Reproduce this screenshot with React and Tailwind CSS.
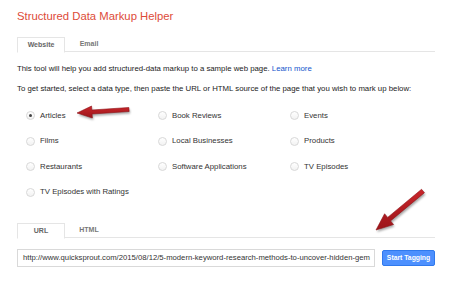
const TYPES = [
  'Articles', 'Book Reviews', 'Events',
  'Films', 'Local Businesses', 'Products',
  'Restaurants', 'Software Applications', 'TV Episodes',
  'TV Episodes with Ratings',
];

function arrowPoints([x1, y1], [x2, y2], shaft, headLen, headW) {
  const len = Math.hypot(x2 - x1, y2 - y1);
  const ux = (x2 - x1) / len;
  const uy = (y2 - y1) / len;
  const nx = -uy;
  const ny = ux;
  const nkx = x2 - ux * headLen;
  const nky = y2 - uy * headLen;
  const p = (x, y, k) => `${x + nx * k},${y + ny * k}`;
  return [
    p(x1, y1, shaft / 2),
    p(nkx, nky, shaft / 2),
    p(nkx, nky, headW / 2),
    `${x2},${y2}`,
    p(nkx, nky, -headW / 2),
    p(nkx, nky, -shaft / 2),
    p(x1, y1, -shaft / 2),
  ].join(' ');
}

function Arrows() {
  const a1 = arrowPoints([129, 109.5], [77, 113], 4, 15, 12);
  const a2 = arrowPoints([423, 191], [376, 230], 4.5, 17, 14);
  return (
    <svg className="absolute inset-0 pointer-events-none" width="474" height="289">
      <defs>
        <filter id="sh" x="-20%" y="-20%" width="140%" height="140%">
          <feGaussianBlur stdDeviation="1.2" />
        </filter>
        <linearGradient id="red" x1="0" y1="0" x2="0" y2="1">
          <stop offset="0" stopColor="#c9262b" />
          <stop offset="1" stopColor="#9b151a" />
        </linearGradient>
      </defs>
      {[a1, a2].map((pts, i) => (
        <g key={i}>
          <polygon points={pts} fill="rgba(0,0,0,0.35)" filter="url(#sh)" transform="translate(1,2)" />
          <polygon points={pts} fill="url(#red)" stroke="#8e1217" strokeWidth="0.6" strokeLinejoin="round" />
        </g>
      ))}
    </svg>
  );
}

function Tabs({ items }) {
  return (
    <div className="flex h-[15px] border-b border-[#e5e5e5]">
      {items.map((t, i) => (
        <div
          key={t}
          className={
            i === 0
              ? 'w-[48px] h-[16px] -mb-px flex items-center justify-center border border-[#e5e5e5] border-b-white bg-white text-[7px] font-bold text-[#666]'
              : 'w-[48px] h-[15px] flex items-center justify-center text-[7px] font-bold text-[#777]'
          }
        >
          {t}
        </div>
      ))}
    </div>
  );
}

function Radio({ label, checked }) {
  return (
    <div className="flex items-center h-[25.5px]">
      <span className="w-[9px] h-[9px] rounded-full border border-[#d8d8d8] bg-gradient-to-b from-white to-[#f2f2f2] flex items-center justify-center shrink-0">
        {checked && <span className="w-[3px] h-[3px] rounded-full bg-[#444]" />}
      </span>
      <span className="ml-[5px] text-[7.8px] text-[#333]">{label}</span>
    </div>
  );
}

export default function App() {
  return (
    <div className="relative w-[474px] h-[289px] bg-white overflow-hidden font-['Liberation_Sans',Arial,sans-serif]">
      <div className="pl-[17px] w-[435px]">
        <h1 className="pt-[9px] text-[11.3px] leading-[14px] text-[#dd4b39]">Structured Data Markup Helper</h1>

        <div className="mt-[14px]">
          <Tabs items={['Website', 'Email']} />
        </div>

        <p className="mt-[11px] text-[7.8px] leading-[12px] text-[#222]">
          This tool will help you add structured-data markup to a sample web page.{' '}
          <span className="text-[#1155cc]">Learn more</span>
        </p>
        <p className="mt-[8px] text-[7.8px] leading-[12px] text-[#222] whitespace-nowrap">
          To get started, select a data type, then paste the URL or HTML source of the page that you wish to mark up below:
        </p>

        <div className="mt-[8px] ml-[9px] grid grid-cols-[132px_132px_132px]">
          {TYPES.map((t, i) => (
            <Radio key={t} label={t} checked={i === 0} />
          ))}
        </div>

        <div className="mt-[18px]">
          <Tabs items={['URL', 'HTML']} />
        </div>

        <div className="mt-[11px] flex items-center gap-[7px]">
          <div className="w-[358px] h-[18px] border border-[#d9d9d9] flex items-center pl-[5px] pr-[3px]">
            <span className="text-[7.7px] text-[#333] whitespace-nowrap">
              http://www.quicksprout.com/2015/08/12/5-modern-keyword-research-methods-to-uncover-hidden-gem
            </span>
          </div>
          <button className="w-[53px] h-[16px] rounded-[2px] bg-[#4d90fe] border border-[#3079ed] text-white text-[6.8px] font-bold flex items-center justify-center">
            Start Tagging
          </button>
        </div>
      </div>
      <Arrows />
    </div>
  );
}
